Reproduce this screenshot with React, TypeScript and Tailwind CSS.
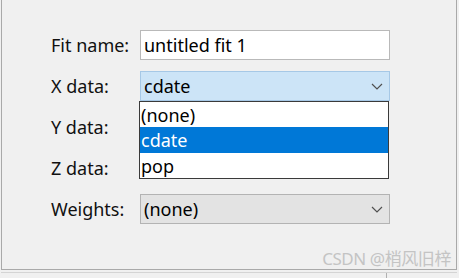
import React from 'react';

const font = { fontFamily: '"Noto Sans", "Open Sans", Arial, sans-serif' };

function Chevron() {
  return (
    <svg width="12" height="7" viewBox="0 0 12 7" className="text-[#505050]">
      <path d="M1 1 L6 6 L11 1" fill="none" stroke="currentColor" strokeWidth="1.2" />
    </svg>
  );
}

function Row({ label, children }: { label: string; children: React.ReactNode }) {
  return (
    <div className="flex items-center h-[30px]">
      <div className="w-[89px] text-[18px] leading-none text-[#111]">{label}</div>
      {children}
    </div>
  );
}

export default function App() {
  return (
    <div className="w-[459px] h-[278px] bg-[#f0f0f0] overflow-hidden relative" style={font}>
      <div className="ml-[1px] mr-[2px] h-[270px] border-l border-r border-b border-[#a9a9a9] relative">
        <div className="pt-[30px] pl-[49px] flex flex-col gap-[11px]">
          <Row label="Fit name:">
            <div className="w-[250px] h-[30px] bg-white border border-[#b9b9b9] flex items-center pl-[3px] text-[18px] text-black">
              untitled fit 1
            </div>
          </Row>
          <Row label="X data:">
            <div className="w-[250px] h-[30px] bg-[#cce4f7] border border-[#a6c8e6] flex items-center justify-between pl-[3px] pr-[6px] text-[18px] text-black">
              <span>cdate</span>
              <Chevron />
            </div>
          </Row>
          <Row label="Y data:">
            <div className="w-[250px] h-[30px]" />
          </Row>
          <Row label="Z data:">
            <div className="w-[250px] h-[30px]" />
          </Row>
          <Row label="Weights:">
            <div className="w-[250px] h-[30px] bg-[#e3e3e3] border border-[#b3b3b3] flex items-center justify-between pl-[3px] pr-[6px] text-[18px] text-black">
              <span>(none)</span>
              <Chevron />
            </div>
          </Row>
        </div>

        <div className="absolute left-[137px] top-[101px] w-[250px] h-[78px] bg-white border border-[#3a3a3a] flex flex-col text-[18px] leading-none">
          <div className="h-[25px] flex items-center pl-[1px] text-black">(none)</div>
          <div className="h-[26px] flex items-center pl-[1px] bg-[#0078d7] text-white">cdate</div>
          <div className="h-[25px] flex items-center pl-[1px] text-black">pop</div>
        </div>

        <div
          className="absolute right-[5px] bottom-[2px] text-[17px] leading-none text-[#c4c4c4] tracking-tight"
          style={{ fontFamily: '"Noto Sans", "Noto Sans CJK SC", sans-serif' }}
        >
          CSDN @梢风旧梓
        </div>
      </div>
      <div className="ml-[1px] mr-[2px] h-[8px] border-t border-[#d4d4d4] mt-[2px] flex">
        <div className="w-[386px] border-r border-[#b0b0b0]" />
      </div>
    </div>
  );
}
